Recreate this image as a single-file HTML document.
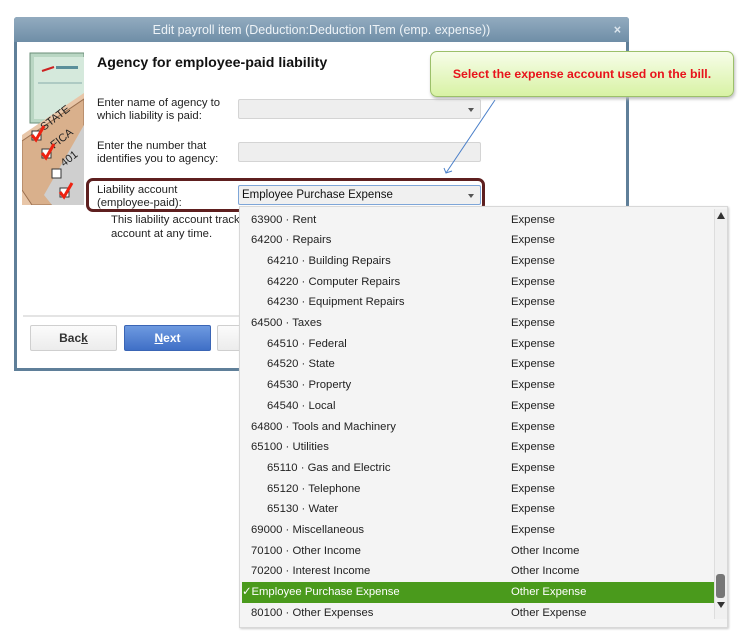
<!DOCTYPE html>
<html><head><meta charset="utf-8"><style>
*{margin:0;padding:0;box-sizing:border-box}
body{width:744px;height:635px;background:#fff;position:relative;overflow:hidden;font-family:"Liberation Sans",Arial,sans-serif;font-size:12px;color:#222}
.abs{position:absolute}
.dlg{left:14px;top:17px;width:615px;height:354px;background:#5f7f99;border-radius:3px 3px 0 0}
.title{left:14px;top:17px;width:615px;height:25px;background:linear-gradient(#92abbf,#6f8ea7);color:#eef3f7;font-size:12.5px;text-align:center;line-height:26px;border-radius:3px 3px 0 0}
.body{left:17px;top:42px;width:609px;height:326px;background:#fff}
.lbl{font-size:11.3px;line-height:13px;color:#222}
.field{background:#eeeeee;border:1px solid #d4d4d4;border-radius:2px;height:20px}
.arr{position:absolute;right:6px;top:8px;width:0;height:0;border-left:3.5px solid transparent;border-right:3.5px solid transparent;border-top:4px solid #555}
.btn{height:26px;border:1px solid #cfcfcf;border-radius:2px;background:linear-gradient(#fbfbfb,#ececec);text-align:center;line-height:24px;font-weight:bold;color:#333}
.list{left:239px;top:206px;width:489px;height:422px;background:#f4f4f4;border:1px solid #d8d8d8;box-shadow:1px 1px 2px #ccc}
.row{position:absolute;left:0;width:474px;height:20.7px;line-height:20.7px;font-size:11.3px;color:#222}
.row .a{position:absolute;left:11px}
.row .a.i{left:27px}
.row .t{position:absolute;left:271px}
.sel{background:#4a9a1c;color:#fff}
</style></head><body>
<div class="abs dlg"></div>
<div class="abs title">Edit payroll item (Deduction:Deduction ITem (emp. expense))<span style="position:absolute;right:8px;top:0;font-weight:bold;color:#dde6ee">×</span></div>
<div class="abs body"></div>
<svg class="abs" style="left:22px;top:45px" width="62" height="160" viewBox="0 0 62 160">
<rect x="0" y="0" width="62" height="160" fill="#fff"/>
<rect x="8" y="8" width="54" height="70" fill="#b9d6c3" stroke="#6b8f78"/>
<rect x="12" y="12" width="50" height="62" fill="#d5e9dc"/>
<line x1="20" y1="26" x2="32" y2="22" stroke="#c22" stroke-width="2"/>
<rect x="34" y="21" width="22" height="3" fill="#5a8f9a"/>
<line x1="16" y1="38" x2="60" y2="38" stroke="#8aa"/>
<polygon points="0,90 62,48 62,160 0,160" fill="#e8c6a8"/>
<polygon points="0,96 62,54 62,160 10,160 0,145" fill="#d9b08c" stroke="#9a7050"/>
<polygon points="22,150 62,80 62,160 30,160" fill="#cfcfcf"/>
<text x="22" y="86" font-size="11" transform="rotate(-38 22 86)" fill="#222" font-family="Liberation Sans">STATE</text>
<text x="32" y="104" font-size="11" transform="rotate(-38 32 104)" fill="#222" font-family="Liberation Sans">FICA</text>
<text x="42" y="122" font-size="11" transform="rotate(-38 42 122)" fill="#222" font-family="Liberation Sans">401</text>
<rect x="10" y="86" width="9" height="9" fill="#fff" stroke="#333"/>
<rect x="20" y="104" width="9" height="9" fill="#fff" stroke="#333"/>
<rect x="30" y="124" width="9" height="9" fill="#fff" stroke="#333"/>
<rect x="38" y="143" width="9" height="9" fill="#fff" stroke="#333"/>
<path d="M10 90 l4 5 l8 -14" stroke="#e21" stroke-width="3" fill="none"/>
<path d="M20 108 l4 5 l8 -14" stroke="#e21" stroke-width="3" fill="none"/>
<path d="M38 147 l4 5 l8 -14" stroke="#e21" stroke-width="3" fill="none"/>
</svg>
<div class="abs" style="left:97px;top:55px;font-size:14.2px;font-weight:bold;color:#111">Agency for employee-paid liability</div>
<div class="abs lbl" style="left:97px;top:97px">Enter name of agency to<br>which liability is paid:</div>
<div class="abs field" style="left:238px;top:99px;width:243px"><div class="arr"></div></div>
<div class="abs lbl" style="left:97px;top:140px">Enter the number that<br>identifies you to agency:</div>
<div class="abs field" style="left:238px;top:142px;width:243px"></div>
<div class="abs lbl" style="left:97px;top:184px">Liability account<br>(employee-paid):</div>
<div class="abs" style="left:86px;top:178px;width:399px;height:34px;border:3px solid #5e1f1f;border-radius:7px"></div>
<div class="abs field" style="left:238px;top:185px;width:243px;background:#f0f0f0;border-color:#7ea6d8;line-height:18px;padding-left:3px;font-size:11.5px;color:#111">Employee Purchase Expense<div class="arr"></div></div>
<div class="abs lbl" style="left:111px;top:213px;line-height:14px">This liability account track<br>account at any time.</div>
<div class="abs" style="left:23px;top:315px;width:600px;height:2px;background:#e4e4e4"></div>
<div class="abs btn" style="left:30px;top:325px;width:87px">Bac<u>k</u></div>
<div class="abs btn" style="left:124px;top:325px;width:87px;background:linear-gradient(#6e9ae0,#3f6fc6);border-color:#3a65b5;color:#fff"><u>N</u>ext</div>
<div class="abs btn" style="left:217px;top:325px;width:40px"></div>
<div class="abs list">
<div class="row" style="top:2.5px"><span class="a">63900 · Rent</span><span class="t">Expense</span></div>
<div class="row" style="top:23.2px"><span class="a">64200 · Repairs</span><span class="t">Expense</span></div>
<div class="row" style="top:43.9px"><span class="a i">64210 · Building Repairs</span><span class="t">Expense</span></div>
<div class="row" style="top:64.6px"><span class="a i">64220 · Computer Repairs</span><span class="t">Expense</span></div>
<div class="row" style="top:85.3px"><span class="a i">64230 · Equipment Repairs</span><span class="t">Expense</span></div>
<div class="row" style="top:106px"><span class="a">64500 · Taxes</span><span class="t">Expense</span></div>
<div class="row" style="top:126.7px"><span class="a i">64510 · Federal</span><span class="t">Expense</span></div>
<div class="row" style="top:147.4px"><span class="a i">64520 · State</span><span class="t">Expense</span></div>
<div class="row" style="top:168.1px"><span class="a i">64530 · Property</span><span class="t">Expense</span></div>
<div class="row" style="top:188.8px"><span class="a i">64540 · Local</span><span class="t">Expense</span></div>
<div class="row" style="top:209.5px"><span class="a">64800 · Tools and Machinery</span><span class="t">Expense</span></div>
<div class="row" style="top:230.2px"><span class="a">65100 · Utilities</span><span class="t">Expense</span></div>
<div class="row" style="top:250.9px"><span class="a i">65110 · Gas and Electric</span><span class="t">Expense</span></div>
<div class="row" style="top:271.6px"><span class="a i">65120 · Telephone</span><span class="t">Expense</span></div>
<div class="row" style="top:292.3px"><span class="a i">65130 · Water</span><span class="t">Expense</span></div>
<div class="row" style="top:313px"><span class="a">69000 · Miscellaneous</span><span class="t">Expense</span></div>
<div class="row" style="top:333.7px"><span class="a">70100 · Other Income</span><span class="t">Other Income</span></div>
<div class="row" style="top:354.4px"><span class="a">70200 · Interest Income</span><span class="t">Other Income</span></div>
<div class="row sel" style="top:375.1px;left:2px;width:472px"><span class="a" style="left:0">✓Employee Purchase Expense</span><span class="t" style="left:269px">Other Expense</span></div>
<div class="row" style="top:395.8px"><span class="a">80100 · Other Expenses</span><span class="t">Other Expense</span></div>
<div style="position:absolute;left:474px;top:2px;width:13px;height:410px;background:#f0f0f0;border-left:1px solid #ddd"></div>
<div style="position:absolute;left:477px;top:5px;border-left:4px solid transparent;border-right:4px solid transparent;border-bottom:7px solid #333"></div>
<div style="position:absolute;left:476px;top:367px;width:9px;height:24px;background:#777;border-radius:3px"></div>
<div style="position:absolute;left:477px;top:395px;border-left:4px solid transparent;border-right:4px solid transparent;border-top:6px solid #333"></div>
</div>
<svg class="abs" style="left:440px;top:95px" width="60" height="85"><line x1="55" y1="5" x2="6" y2="78" stroke="#4a7fc9" stroke-width="1"/><path d="M4 73 L6 78 L12 76" stroke="#4a7fc9" fill="none"/></svg>
<div class="abs" style="left:430px;top:51px;width:304px;height:46px;border:1px solid #9cc06a;border-radius:7px;background:linear-gradient(#f7fde9,#d8f2a4);box-shadow:1px 2px 3px #bbb;color:#e8131b;font-weight:bold;font-size:12.3px;text-align:center;line-height:44px">Select the expense account used on the bill.</div>
</body></html>
